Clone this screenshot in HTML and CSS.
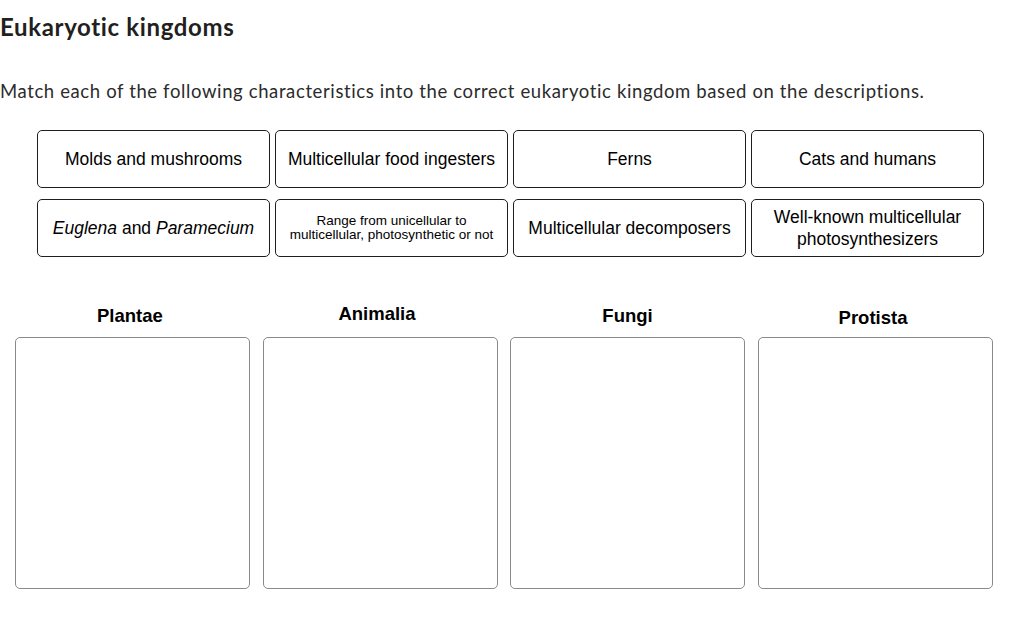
FILE: index.html
```html
<!DOCTYPE html>
<html lang="en">
<head>
<meta charset="utf-8">
<title>Eukaryotic kingdoms</title>
<link rel="stylesheet" href="styles.css">
</head>
<body>
<main class="question">
  <h1 class="title">Eukaryotic kingdoms</h1>
  <p class="prompt">Match each of the following characteristics into the correct eukaryotic kingdom based on the descriptions.</p>

  <div class="choices">
    <div class="choice">Molds and mushrooms</div>
    <div class="choice">Multicellular food ingesters</div>
    <div class="choice">Ferns</div>
    <div class="choice">Cats and humans</div>
    <div class="choice"><span><i>Euglena</i> and <i>Paramecium</i></span></div>
    <div class="choice small">Range from unicellular to<br>multicellular, photosynthetic or not</div>
    <div class="choice">Multicellular decomposers</div>
    <div class="choice">Well-known multicellular photosynthesizers</div>
  </div>

  <div class="targets">
    <section class="target">
      <h2 class="target-label">Plantae</h2>
      <div class="dropzone"></div>
    </section>
    <section class="target">
      <h2 class="target-label up">Animalia</h2>
      <div class="dropzone"></div>
    </section>
    <section class="target">
      <h2 class="target-label">Fungi</h2>
      <div class="dropzone"></div>
    </section>
    <section class="target">
      <h2 class="target-label down">Protista</h2>
      <div class="dropzone"></div>
    </section>
  </div>
</main>
</body>
</html>
```
FILE: styles.css
```css
html, body {
  margin: 0;
  padding: 0;
  background: #fff;
}

.question {
  width: 1033px;
  color: #2b2b2b;
  font-family: "Lato", "Open Sans", sans-serif;
}

.title {
  margin: 0;
  padding-top: 13px;
  font-size: 24px;
  line-height: 28px;
  font-weight: 700;
  letter-spacing: 0.65px;
  color: #231f20;
}

.prompt {
  margin: 0;
  padding-top: 38px;
  font-size: 18.5px;
  line-height: 24px;
  letter-spacing: 0.62px;
  color: #2b2b2b;
}

.choices {
  display: grid;
  grid-template-columns: repeat(4, 233px);
  column-gap: 5px;
  row-gap: 11px;
  margin: 27px 0 0 37px;
}

.choice {
  height: 58px;
  box-sizing: border-box;
  border: 1px solid #1e1e1e;
  border-radius: 5px;
  display: flex;
  align-items: center;
  justify-content: center;
  text-align: center;
  padding: 0 6px;
  font-family: "Liberation Sans", Arial, sans-serif;
  font-size: 17.5px;
  line-height: 22px;
  color: #000;
}

.choice.small {
  font-size: 13.5px;
  line-height: 14px;
  padding: 0 2px;
}

.targets {
  display: grid;
  grid-template-columns: repeat(4, 235px);
  column-gap: 12.5px;
  margin: 46px 0 0 15px;
}

.target {
  display: flex;
  flex-direction: column;
}

.target-label {
  margin: 0;
  height: 32px;
  padding-top: 2px;
  text-align: center;
  font-family: "Liberation Sans", Arial, sans-serif;
  font-size: 18.5px;
  line-height: 22px;
  font-weight: 700;
  color: #000;
  position: relative;
  top: 0;
}

.target:first-child .target-label {
  text-align: left;
  padding-left: 82px;
}

.target-label.up {
  top: -2px;
  left: -3px;
}

.target-label.down {
  top: 2px;
  left: -2px;
}

.dropzone {
  height: 252px;
  box-sizing: border-box;
  border: 1px solid #8a8a8a;
  border-radius: 5px;
}
```
